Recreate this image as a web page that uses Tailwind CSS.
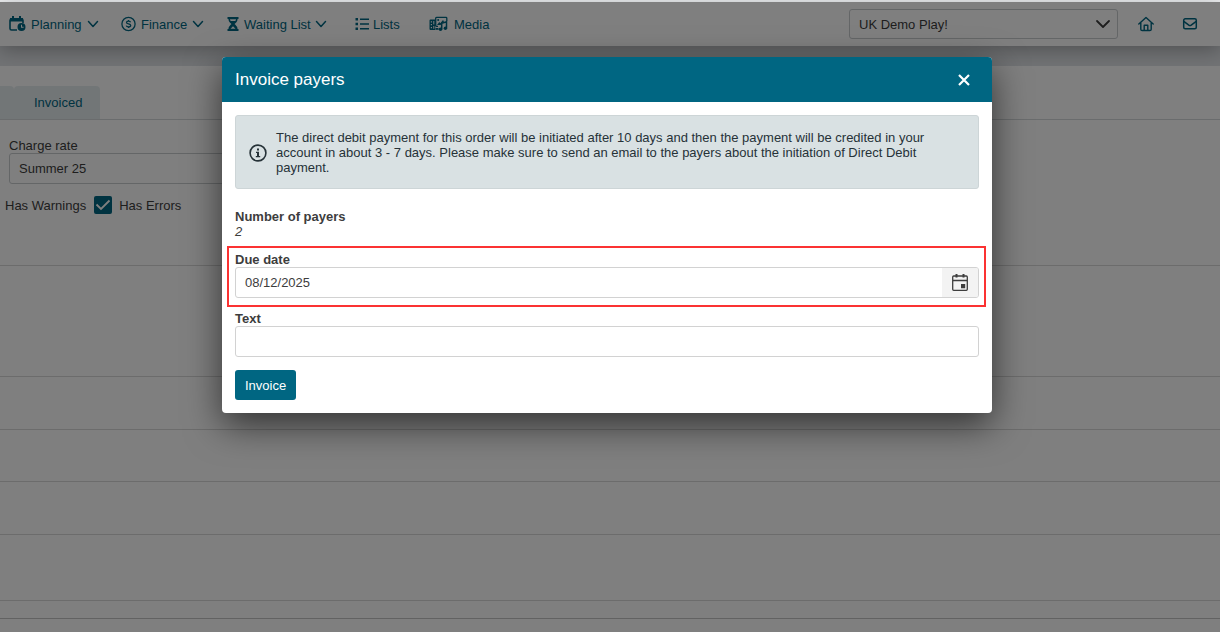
<!DOCTYPE html>
<html lang="en">
<head>
    <meta charset="UTF-8">
    <meta name="viewport" content="width=device-width, initial-scale=1.0">
    <title>Invoice payers</title>
    <script src="https://cdn.jsdelivr.net/npm/@tailwindcss/browser@4"></script>
</head>
<body class="font-['Liberation_Sans',Arial,sans-serif] text-[13px] leading-[15px] text-[#3d3d3d] bg-white">
    <div class="h-[2px] bg-[#eceef0]"></div>

    <div class="relative min-h-[calc(100vh-2px)] bg-[#e3e6ea]">
        <header class="relative flex items-center justify-between h-11 bg-white shadow-[0_4px_20px_rgba(0,0,0,0.3)] text-[#006682]">
            <nav class="flex items-center pl-2">
                <a href="#" class="flex items-center w-28">
                    <svg class="w-[18px] h-4 mr-[5px]" viewBox="0 0 18 16" fill="currentColor">
                        <path d="M5 0v3M12 0v3" stroke="currentColor" stroke-width="2" fill="none"/>
                        <path d="M9 14H3.500Q2 14 2 12.500V4.500Q2 3 3.500 3H13.500Q15 3 15 4.500V7" stroke="currentColor" stroke-width="1.600" fill="none"/>
                        <path d="M2 2h13v3.500H2z"/>
                        <path fill-rule="evenodd" d="M13.500 7a4 4 0 1 0 0 8 4 4 0 0 0 0-8zM13 8.800h1v2h1.600v1H13z"/>
                    </svg>
                    <span>Planning</span>
                    <svg class="w-3 h-3 ml-[5px]" viewBox="0 0 12 12" fill="none" stroke="currentColor" stroke-width="1.500" stroke-linecap="round" stroke-linejoin="round"><path d="M1.500 3.500 6 8.500l4.500-5"/></svg>
                </a>
                <a href="#" class="flex items-center w-[106px]">
                    <svg class="w-4 h-4 mr-[5px]" viewBox="0 0 16 16" fill="none" stroke="currentColor" stroke-width="1.300">
                        <circle cx="8.500" cy="8" r="6.600"/>
                        <path d="M10.600 6.300C10.300 5.400 9.500 5.200 8.500 5.200c-1.200 0-2 .5-2 1.300 0 2 4.200.9 4.200 3 0 .9-.9 1.400-2.200 1.400-1.200 0-2-.4-2.200-1.300M8.500 4v1.200M8.500 10.900V12"/>
                    </svg>
                    <span>Finance</span>
                    <svg class="w-3 h-3 ml-[5px]" viewBox="0 0 12 12" fill="none" stroke="currentColor" stroke-width="1.500" stroke-linecap="round" stroke-linejoin="round"><path d="M1.500 3.500 6 8.500l4.500-5"/></svg>
                </a>
                <a href="#" class="flex items-center w-32">
                    <svg class="w-[14px] h-4 mr-1" viewBox="0 0 14 16" fill="currentColor">
                        <path d="M1.500 1h11v2h-11zM1.500 13h11v2h-11z"/>
                        <path fill-rule="evenodd" d="M2.500 2h9v1.500C11.500 5.500 9.500 7 8.500 8c1 1 3 2.500 3 4.500V14h-9v-1.500c0-2 2-3.500 3-4.500-1-1-3-2.500-3-4.500zM4 3.200c0 .8.300 1.300.8 1.800h4.400c.5-.5.8-1 .8-1.800zM4.500 12.800h5L7 10.200z"/>
                    </svg>
                    <span>Waiting List</span>
                    <svg class="w-3 h-3 ml-1" viewBox="0 0 12 12" fill="none" stroke="currentColor" stroke-width="1.500" stroke-linecap="round" stroke-linejoin="round"><path d="M1.500 3.500 6 8.500l4.500-5"/></svg>
                </a>
                <a href="#" class="flex items-center w-[75px]">
                    <svg class="w-4 h-4 mr-[3px]" viewBox="0 0 16 16" fill="currentColor">
                        <path d="M1.500 2H4v2.500H1.500zM1.500 6.800H4v2.500H1.500zM1.500 11.600H4v2.500H1.500zM6 2.500h9v1.400H6zM6 7.300h9v1.400H6zM6 12.100h9v1.400H6z"/>
                    </svg>
                    <span>Lists</span>
                </a>
                <a href="#" class="flex items-center">
                    <svg class="w-5 h-4 mr-[5px]" viewBox="0 0 20 16" fill="currentColor">
                        <path fill-rule="evenodd" d="M1.500 3.500h4.700v10.500H1.500q-1 0-1-1v-8.500q0-1 1-1zM1.800 5.200v1.300h1.200V5.200zM1.800 8v1.300h1.200V8zM1.800 11v1.300h1.200V11zM4.300 5h1v3.500h-1zM4.300 10h1v2.800h-1z"/>
                        <path d="M9 10.300H7.500q-.8 0-.8-.8V2.200q0-.8.800-.8H17q.8 0 .8.800V5" fill="none" stroke="currentColor" stroke-width="1.300"/>
                        <path d="M8 9l2.300-3 1 1.200L14 4l1 1.500L11.500 9z"/>
                        <circle cx="9.200" cy="3.900" r="1"/>
                        <path d="M12.700 13V7.200l4.800-1.500v6.500" fill="none" stroke="currentColor" stroke-width="1.500"/>
                        <path d="M6.500 12h3v1.800h-3z"/>
                        <circle cx="11.500" cy="13.300" r="1.800"/>
                        <circle cx="16.400" cy="12.300" r="1.700"/>
                    </svg>
                    <span>Media</span>
                </a>
            </nav>
            <div class="flex items-center pr-[22px]">
                <div class="relative w-[269px] mr-5">
                    <select aria-label="Site" class="appearance-none w-full h-[30px] px-[9px] border border-[#c9cccf] rounded-[3px] bg-white text-[#3d3d3d]">
                        <option>UK Demo Play!</option>
                    </select>
                    <svg class="absolute right-[7px] top-2 w-4 h-4 text-[#3d3d3d] pointer-events-none" viewBox="0 0 16 16" fill="none" stroke="currentColor" stroke-width="1.800" stroke-linecap="round" stroke-linejoin="round"><path d="M2 4 8 10l6-6"/></svg>
                </div>
                <a href="#" aria-label="Home" class="mr-7">
                    <svg class="w-4 h-4" viewBox="0 0 16 16" fill="none" stroke="currentColor" stroke-width="1.400" stroke-linejoin="round" stroke-linecap="round">
                        <path d="M.8 8 8 1.500 15.200 8M2.800 6.800v6.400q0 1.300 1.300 1.300h7.800q1.300 0 1.300-1.300V6.800M6.200 14.300V9.200h3.600v5.100"/>
                    </svg>
                </a>
                <a href="#" aria-label="Messages">
                    <svg class="w-4 h-4" viewBox="0 0 16 16" fill="none" stroke="currentColor" stroke-width="1.500" stroke-linejoin="round">
                        <rect x="1.700" y="2.800" width="12.600" height="10" rx="1.500"/>
                        <path d="M1.800 5.300 6.800 9.200q1.200.8 2.400 0l5-3.900"/>
                    </svg>
                </a>
            </div>
        </header>

        <main class="relative mt-5 bg-white">
            <div class="flex items-end h-[54px] border-b border-[#d5d8da]">
                <div class="w-[14px] h-[33px] bg-[#e5edef] rounded-tr-[4px]"></div>
                <a href="#" class="flex items-center h-[33px] pl-5 pr-[18px] bg-[#e5edef] rounded-t-[4px] text-[#006682]">Invoiced</a>
            </div>
            <form class="h-[146px] pt-[18px] border-b border-[#d9d9d9]">
                <div class="flex flex-col px-[9px]">
                    <label for="rate">Charge rate</label>
                    <input id="rate" type="text" value="Summer 25" class="h-[31px] w-80 px-[9px] border border-[#c9cccf] rounded-[3px]">
                </div>
                <div class="flex items-center mt-3 pl-[5px] gap-[7px]">
                    <label for="errors">Has Warnings</label>
                    <span class="relative flex w-[19px] h-[18px] justify-end">
                        <input id="errors" type="checkbox" checked class="appearance-none w-[18px] h-[18px] rounded-[2px] bg-[#006682]">
                        <svg class="absolute right-px top-px w-4 h-4 pointer-events-none" viewBox="0 0 16 16" fill="none" stroke="white" stroke-width="1.800"><path d="M1.500 7.500 6 12 14.500 3.500"/></svg>
                    </span>
                    <label for="errors">Has Errors</label>
                </div>
            </form>
            <div class="h-[111px] border-b border-[#d9d9d9]"></div>
            <div class="h-[53px] border-b border-[#d9d9d9]"></div>
            <div class="h-[52px] border-b border-[#d9d9d9]"></div>
            <div class="h-[53px] border-b border-[#d9d9d9]"></div>
            <div class="h-[66px] border-b border-[#d9d9d9]"></div>
            <div class="h-[18px] border-b border-[#c4c4c4]"></div>
            <div class="h-[13px]"></div>
        </main>

        <!-- Modal -->
        <div class="absolute inset-0 flex items-start justify-center pt-[55px] pr-[6px] bg-black/50">
            <section role="dialog" aria-labelledby="dialogTitle" class="w-[770px] max-w-full bg-white rounded-[4px] shadow-[0_12px_36px_rgba(0,0,0,0.6)]">
                <div class="flex items-center justify-between h-[45px] pl-[13px] pr-5 bg-[#006682] text-white rounded-t-[4px]">
                    <h2 id="dialogTitle" class="text-[17px] leading-5">Invoice payers</h2>
                    <button type="button" aria-label="Close">
                        <svg class="w-4 h-4" viewBox="0 0 16 16" fill="none" stroke="currentColor" stroke-width="2.200"><path d="M3 3l10 10M13 3 3 13"/></svg>
                    </button>
                </div>
                <form class="p-[13px]">
                    <div class="flex items-center pt-[14px] pb-[13px] pl-[13px] pr-9 border border-[#cdd5d7] rounded-[3px] bg-[#d9e1e3] text-[#263238]">
                        <svg class="shrink-0 w-[18px] h-[18px] mr-[9px]" viewBox="0 0 18 18" fill="currentColor">
                            <circle cx="9" cy="9" r="7.900" fill="none" stroke="currentColor" stroke-width="1.600"/>
                            <path d="M8 4.500h2v2H8zM7 7.800h3V12h1.200v1.300H6.800V12H8V9.100H7z"/>
                        </svg>
                        <p>The direct debit payment for this order will be initiated after 10 days and then the payment will be credited in your account in about 3 - 7 days. Please make sure to send an email to the payers about the initiation of Direct Debit payment.</p>
                    </div>
                    <div class="mt-5 font-bold">Number of payers</div>
                    <div class="italic">2</div>

                    <div class="-ml-2 -mr-[7px] mt-[7px] mb-1 pl-[6px] pr-[5px] pt-1 pb-[7px] border-2 border-[#fb3232]">
                        <label for="dueDate" class="block font-bold">Due date</label>
                        <div class="flex h-[31px] border border-[#d2d2d2] rounded-[3px] overflow-hidden">
                            <input id="dueDate" type="text" value="08/12/2025" class="grow px-[9px]">
                            <button type="button" aria-label="Open calendar" class="flex items-center justify-center w-9 bg-[#f3f3f3] text-[#3d3d3d]">
                                <svg class="w-4 h-[18px]" viewBox="0 0 16 18" fill="none" stroke="currentColor">
                                    <rect x=".7" y="2" width="14.600" height="14.300" rx="1" stroke-width="1.300"/>
                                    <path d="M1 6.500h14" stroke-width="1.300"/>
                                    <path d="M4.500 0v3.500M11.500 0v3.500" stroke-width="2"/>
                                    <path d="M9 10h4.200v4.200H9z" fill="currentColor" stroke="none"/>
                                </svg>
                            </button>
                        </div>
                    </div>

                    <label for="text" class="block font-bold">Text</label>
                    <input id="text" type="text" class="block w-full h-[31px] px-[9px] border border-[#d2d2d2] rounded-[3px]">
                    <button type="submit" class="mt-[13px] h-[30px] px-[10px] rounded-[3px] bg-[#006682] text-white">Invoice</button>
                </form>
            </section>
        </div>
    </div>
</body>
</html>
